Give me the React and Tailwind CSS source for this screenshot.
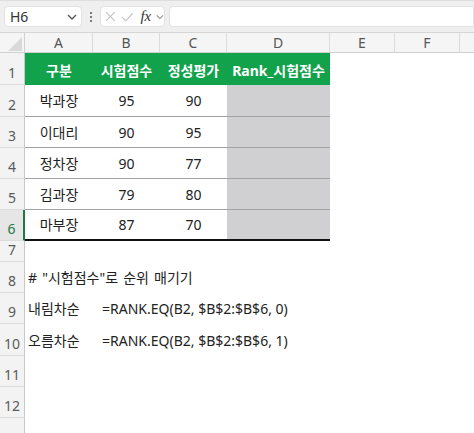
import React from "react";

const font = "font-['Noto_Sans','Noto_Sans_CJK_KR',sans-serif]";

const Chevron = ({ className = "" }) => (
  <svg width="10" height="6" viewBox="0 0 10 6" className={className}>
    <path d="M1 1 L5 5 L9 1" fill="none" stroke="currentColor" strokeWidth="1.3" />
  </svg>
);

function RowHead({ n, h, active }) {
  return (
    <div
      className={`w-[25px] shrink-0 flex items-end justify-center pb-[1px] border-b border-[#dcdcdc] text-[14px] ${
        active ? "bg-[#e6e6e6] text-[#1e7a45] border-r-2 border-r-[#1e7a45]" : "bg-[#f3f3f3] text-[#5a5a5a] border-r border-r-[#c8c8c8]"
      }`}
      style={{ height: h }}
    >
      {n}
    </div>
  );
}

const data = [
  ["박과장", "95", "90"],
  ["이대리", "90", "95"],
  ["정차장", "90", "77"],
  ["김과장", "79", "80"],
  ["마부장", "87", "70"],
];
const heights = [32, 31, 31, 31, 31];

export default function App() {
  return (
    <div className={`w-[474px] h-[433px] overflow-hidden bg-white ${font} text-[#222]`}>
      {/* formula bar */}
      <div className="h-[33px] bg-[#efefef] border-t border-[#dedede] border-b border-b-[#d6d6d6] flex items-center pl-[4px] gap-0">
        <div className="w-[78px] h-[21px] bg-white rounded-[4px] border border-[#e2e2e2] flex items-center justify-between pl-[5px] pr-[4px] text-[14px] text-[#333]">
          <span>H6</span>
          <Chevron className="text-[#555]" />
        </div>
        <div className="w-[18px] flex flex-col items-center gap-[2px]">
          <span className="w-[2px] h-[2px] bg-[#555] rounded-full" />
          <span className="w-[2px] h-[2px] bg-[#555] rounded-full" />
          <span className="w-[2px] h-[2px] bg-[#555] rounded-full" />
        </div>
        <div className="w-[65px] h-[21px] bg-white rounded-[4px] border border-[#e2e2e2] flex items-center pl-[4px] gap-[5px]">
          <svg width="11" height="11" viewBox="0 0 11 11">
            <path d="M1 1 L10 10 M10 1 L1 10" stroke="#c4c4c4" strokeWidth="1.2" />
          </svg>
          <svg width="13" height="10" viewBox="0 0 13 10">
            <path d="M1 5 L5 9 L12 1" fill="none" stroke="#c4c4c4" strokeWidth="1.2" />
          </svg>
          <span className="font-['Liberation_Serif',serif] italic text-[15px] text-[#333] leading-none ml-[2px]">fx</span>
          <Chevron className="text-[#888] w-[8px]" />
        </div>
        <div className="ml-[4px] flex-1 h-[21px] bg-white rounded-l-[4px] border border-[#e2e2e2]" />
      </div>

      {/* column header */}
      <div className="flex h-[20px] bg-[#f5f5f5] border-b border-[#d0d0d0] text-[14px] text-[#555]">
        <div className="w-[25px] shrink-0 border-r border-[#d0d0d0] relative overflow-hidden">
          <svg width="25" height="20" viewBox="0 0 25 20" className="absolute inset-0">
            <path d="M22 4 L22 18 L8 18 Z" fill="#d9d9d9" />
          </svg>
        </div>
        {[["A", 68], ["B", 67], ["C", 67], ["D", 103], ["E", 65], ["F", 65]].map(([c, w]) => (
          <div key={c} className="shrink-0 flex items-center justify-center border-r border-[#dcdcdc]" style={{ width: w }}>
            {c}
          </div>
        ))}
      </div>

      {/* row 1 */}
      <div className="flex">
        <RowHead n="1" h={32} />
        <div className="flex h-[32px] w-[305px] bg-[#13a24c] text-white font-bold text-[14px] items-center pt-[2px]">
          <div className="w-[68px] text-center">구분</div>
          <div className="w-[67px] text-center">시험점수</div>
          <div className="w-[67px] text-center">정성평가</div>
          <div className="w-[103px] text-center">Rank_시험점수</div>
        </div>
      </div>

      {data.map((r, i) => {
        const last = i === data.length - 1;
        return (
          <div key={i} className="flex">
            <RowHead n={String(i + 2)} h={heights[i]} active={last} />
            <div
              className={`flex w-[305px] text-[14px] items-center ${
                last ? "border-b-2 border-[#111]" : "border-b border-[#a3a3a3]"
              }`}
              style={{ height: heights[i] }}
            >
              <div className="w-[68px] text-center">{r[0]}</div>
              <div className="w-[67px] text-center">{r[1]}</div>
              <div className="w-[67px] text-center">{r[2]}</div>
              <div className="w-[103px] h-full bg-[#d0cfd2]" />
            </div>
          </div>
        );
      })}

      {/* row 7 */}
      <div className="flex">
        <RowHead n="7" h={21} />
      </div>
      {/* row 8 */}
      <div className="flex">
        <RowHead n="8" h={31} />
        <div className="flex items-center pl-[3px] text-[14px] whitespace-nowrap [word-spacing:1.5px]">
          # "시험점수"로 순위 매기기
        </div>
      </div>
      <div className="flex">
        <RowHead n="9" h={31} />
        <div className="flex items-center pl-[3px] text-[14px] whitespace-nowrap">
          <span className="w-[74px]">내림차순</span>
          <span>=RANK.EQ(B2, $B$2:$B$6, 0)</span>
        </div>
      </div>
      <div className="flex">
        <RowHead n="10" h={32} />
        <div className="flex items-center pl-[3px] text-[14px] whitespace-nowrap">
          <span className="w-[74px]">오름차순</span>
          <span>=RANK.EQ(B2, $B$2:$B$6, 1)</span>
        </div>
      </div>
      <div className="flex">
        <RowHead n="11" h={31} />
      </div>
      <div className="flex">
        <RowHead n="12" h={31} />
      </div>
      <div className="flex">
        <RowHead n="" h={31} />
      </div>
    </div>
  );
}
